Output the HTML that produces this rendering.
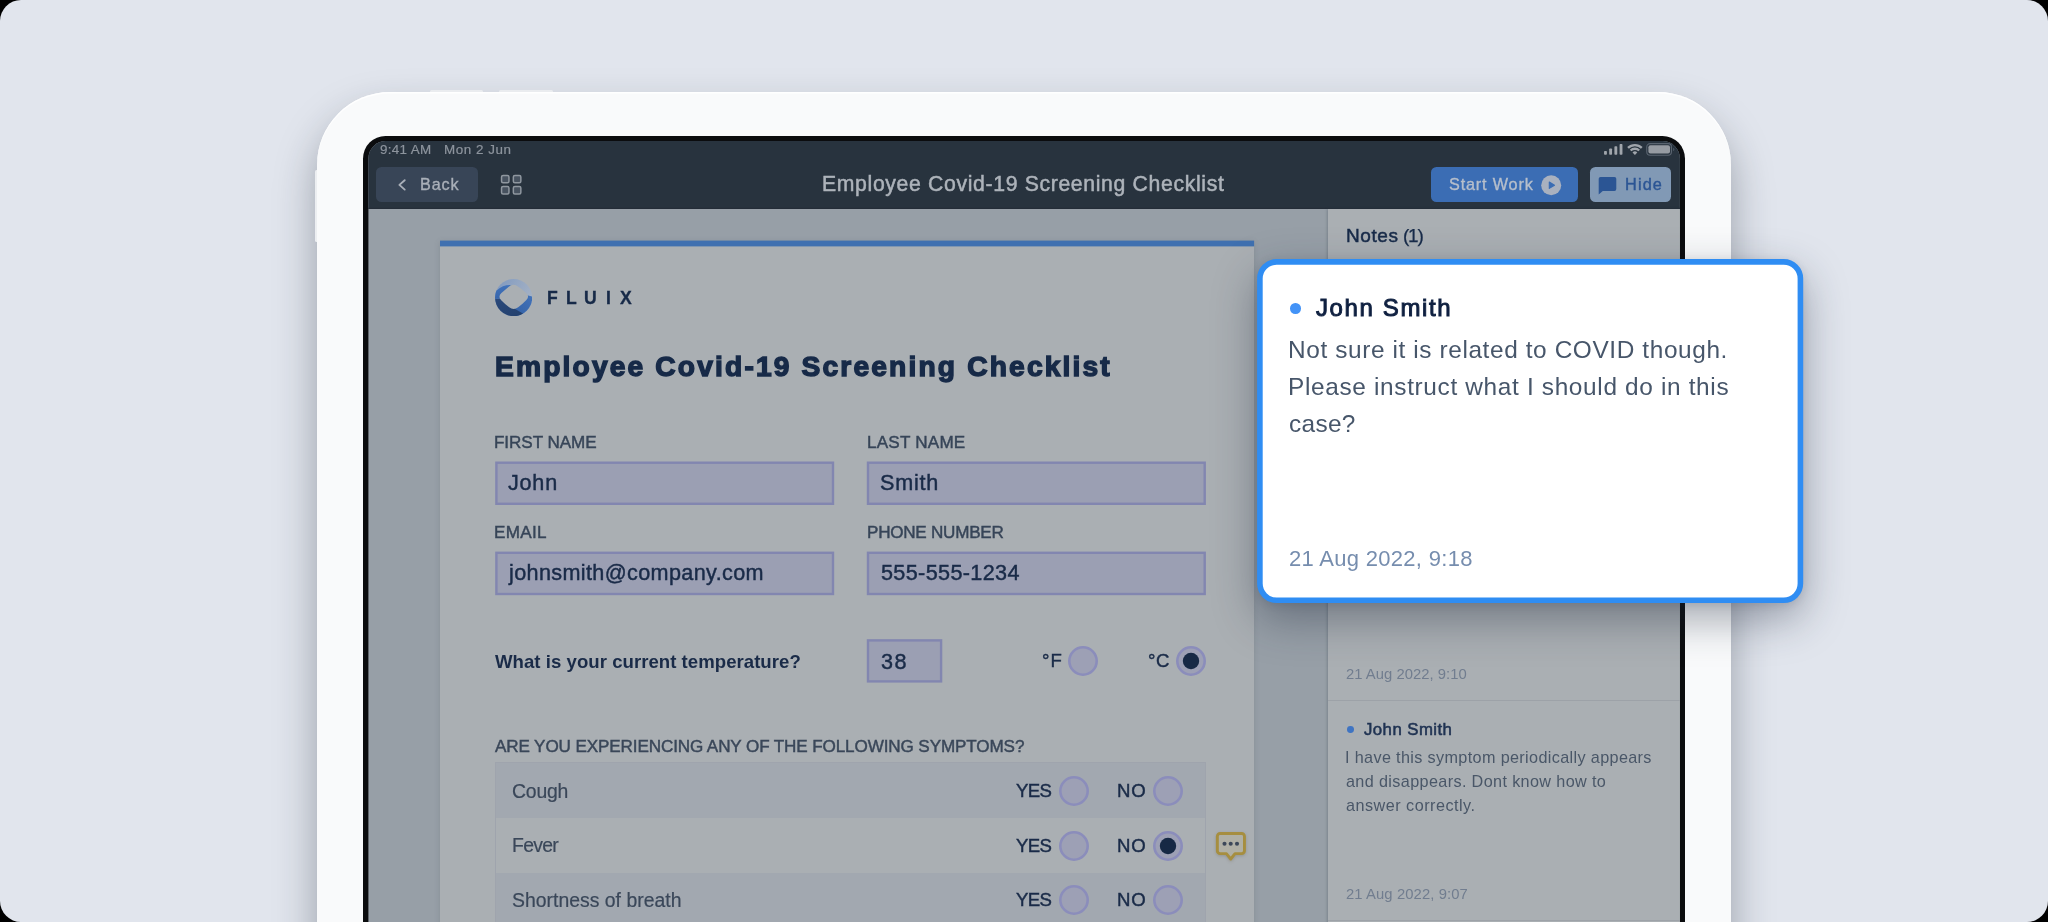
<!DOCTYPE html>
<html><head><meta charset="utf-8"><title>Employee Covid-19 Screening Checklist</title>
<style>
html,body{margin:0;padding:0;background:#000;}
body{width:2048px;height:922px;overflow:hidden;position:relative;font-family:"Liberation Sans",sans-serif;}
#bg{position:absolute;left:0;top:0;width:2048px;height:922px;border-radius:21px;background:#e1e5ed;overflow:hidden;}
.a{position:absolute;display:block;}
.t{will-change:transform;position:absolute;display:block;white-space:nowrap;line-height:1;font-family:"Liberation Sans",sans-serif;}
#tablet{left:317px;top:92px;width:1414px;height:1000px;border-radius:73px;background:#f9fafb;box-shadow:0 22px 42px rgba(28,34,50,.37),inset 0 1.5px 1px #fff;}
#bezel{left:363.1px;top:136px;width:1321.8px;height:1000px;border-radius:22.5px;background:#0b0c0e;}
#screen{left:0;top:0;width:2048px;height:922px;clip-path:inset(141px 368.1px -60px 368.4px round 17.5px);background:#979fa7;}
#nav{left:368px;top:141px;width:1313px;height:67.6px;background:#28333e;box-shadow:inset 0 -1.2px 0 #242d38;}
.btn{border-radius:5.5px;}
#bback{left:376px;top:167.2px;width:102.2px;height:34.8px;background:#384557;}
#bstart{left:1430.7px;top:166.9px;width:147.3px;height:35.2px;background:#3b6db4;}
#bhide{left:1590px;top:166.9px;width:81.2px;height:35.2px;background:#8199b5;}
#doc{left:440px;top:240.6px;width:814px;height:700px;background:#aaafb3;box-shadow:0 1px 6px rgba(60,70,85,.18);}
#notes{left:1328.4px;top:208.6px;width:360px;height:720px;background:#aaafb3;box-shadow:-1px 0 2.5px rgba(50,60,80,.28);}
.sep{left:1328.3px;width:352px;height:1.4px;background:#9da2a8;}
.row{left:496px;width:709.5px;}
#tbl{left:495px;top:762.4px;width:711px;height:170px;box-sizing:border-box;border:1.2px solid #9fa4ad;}
#popup{left:1258px;top:260px;width:544px;height:342px;border-radius:18.5px;background:#fff;box-shadow:0 16px 44px 1px rgba(30,40,60,.40),0 2px 8px 1px rgba(40,50,70,.12);}
.dot{border-radius:50%;}

</style></head>
<body>
<div id="bg">
  <div class="a" id="tablet"></div>
  <div class="a" style="left:430px;top:89.9px;width:53px;height:2.3px;border-radius:1.5px 1.5px 0 0;background:#eaecef"></div>
  <div class="a" style="left:499.3px;top:89.9px;width:53.6px;height:2.3px;border-radius:1.5px 1.5px 0 0;background:#eaecef"></div>
  <div class="a" style="left:314.9px;top:170.2px;width:2.3px;height:71.6px;border-radius:1.5px 0 0 1.5px;background:#eceef1"></div>
  <div class="a" id="bezel"></div>
  <div class="a" id="screen">
    <div class="a" id="nav"></div>
    <div class="a btn" id="bback"></div>
    <div class="a btn" id="bstart"></div>
    <div class="a btn" id="bhide"></div>
    <!-- back chevron -->
    <svg class="a" style="left:390px;top:170px" width="30" height="30" viewBox="390 170 30 30"><path d="M404.7 180.2 L399.4 184.9 L404.7 189.6" fill="none" stroke="#a9afb8" stroke-width="1.9" stroke-linecap="round" stroke-linejoin="round"/></svg>
    <!-- grid icon -->
    <svg class="a" style="left:498px;top:172px" width="26" height="26" viewBox="498 172 26 26"><g fill="#47525f" stroke="#8f979f" stroke-width="1.5"><rect x="501.55" y="175.45" width="7.4" height="7.4" rx="1.5"/><rect x="513.35" y="175.45" width="7.5" height="7.4" rx="1.5"/><rect x="501.55" y="186.6" width="7.4" height="7.4" rx="1.5"/><rect x="513.35" y="186.6" width="7.5" height="7.4" rx="1.5"/></g></svg>
    <!-- status icons -->
    <svg class="a" style="left:1600px;top:141px" width="80" height="18" viewBox="0 0 80 18">
      <g fill="#a0a5ab">
        <rect x="4.05" y="9.9" width="2.85" height="3.9" rx="0.8"/>
        <rect x="9.2" y="7.5" width="2.85" height="6.3" rx="0.8"/>
        <rect x="14.4" y="5.2" width="2.85" height="8.6" rx="0.8"/>
        <rect x="19.6" y="2.9" width="2.85" height="10.9" rx="0.8"/>
      </g>
      <g fill="none" stroke="#a0a5ab" stroke-width="2.3" stroke-linecap="butt">
        <path d="M28.0 6.9 A9.75 9.75 0 0 1 41.8 6.9"/>
        <path d="M30.62 9.52 A6.05 6.05 0 0 1 39.18 9.52"/>
      </g>
      <path d="M34.9 13.9 L32.5 11.5 A3.4 3.4 0 0 1 37.3 11.5 Z" fill="#a0a5ab"/>
      <rect x="46.75" y="2.65" width="24.7" height="11.6" rx="3.4" fill="none" stroke="#5a6470" stroke-width="1.1"/>
      <rect x="48.4" y="4.2" width="21.6" height="8.4" rx="2" fill="#969ba2"/>
      <path d="M73.3 6.7 a2.1 2.1 0 0 1 0 3.5 Z" fill="#5a6470"/>
    </svg>
    <!-- play icon -->
    <svg class="a" style="left:1541px;top:174.8px" width="21" height="21" viewBox="0 0 21 21"><circle cx="10.2" cy="10.2" r="10" fill="#a9b1bf"/><path d="M8.3 7 L13.5 10.2 L8.3 13.4 Z" fill="#3b6db4" stroke="#3b6db4" stroke-width="1.1" stroke-linejoin="round"/></svg>
    <!-- chat icon -->
    <svg class="a" style="left:1598px;top:176px" width="20" height="20" viewBox="0 0 20 20"><path d="M2.6 0.9 H16.4 A1.9 1.9 0 0 1 18.3 2.8 V13.1 A1.9 1.9 0 0 1 16.4 15 H4.8 L0.7 18.6 V2.8 A1.9 1.9 0 0 1 2.6 0.9 Z" fill="#2b5594"/></svg>

    <div class="a" id="doc"></div>
    <svg class="a" style="left:438px;top:238px" width="820" height="12" viewBox="438 238 820 12"><rect x="440" y="240.6" width="814.1" height="5.8" fill="#3f70b0"/></svg>
    <!-- logo -->
    <svg class="a" style="left:494.8px;top:279.2px" width="37.2" height="37.2" viewBox="0 0 37.2 37.2">
      <defs>
        <linearGradient id="lgL" x1="0" y1="0" x2="1" y2="0.6"><stop offset="0" stop-color="#7d97bf"/><stop offset="0.5" stop-color="#93a6c2"/><stop offset="1" stop-color="#a7b3c5"/></linearGradient>
        <linearGradient id="lgM" x1="0" y1="0" x2="0" y2="1"><stop offset="0" stop-color="#4173bb"/><stop offset="1" stop-color="#3765ab"/></linearGradient>
        <linearGradient id="lgN" x1="0" y1="0" x2="1" y2="1"><stop offset="0" stop-color="#2b4a7c"/><stop offset="1" stop-color="#223f6b"/></linearGradient>
        <linearGradient id="lgR" x1="0" y1="1" x2="1" y2="0"><stop offset="0" stop-color="#305ea3"/><stop offset="1" stop-color="#4474ba"/></linearGradient>
        <clipPath id="lc"><circle cx="18.6" cy="18.6" r="18.6"/></clipPath>
      </defs>
      <g clip-path="url(#lc)">
        <rect x="0" y="0" width="37.2" height="37.2" fill="url(#lgL)"/>
        <!-- right-bottom medium blue -->
        <path d="M18.6 18.6 L33.2 16.6 L40 18.2 L40 40 L18 40 Z" fill="url(#lgR)"/>
        <!-- navy bottom-left -->
        <path d="M18.6 18.6 L19.3 29.6 L30.5 36 L30.5 40 L-3 40 L-3 19.8 Z" fill="url(#lgN)"/>
        <!-- left medium blue + overlap wedge -->
        <path d="M18.6 18.6 L-3 20.2 L-3 12.4 L1.9 11.2 Q8.6 5 17.9 6.2 Z" fill="url(#lgM)"/>
      </g>
      <path d="M13.2 8.2 Q17.6 3.9 22.6 7.2 Q27.6 10.4 31 13.8 Q35 17.4 31.4 21 Q27.4 25.2 23.2 28.2 Q18.6 31.6 14.2 28.2 Q9.4 24.6 6.2 21.2 Q2.6 17.6 6.4 14 Z" fill="#aaafb3"/>
    </svg>

    <svg class="a" style="left:490px;top:455px" width="720" height="232" viewBox="490 455 720 232"><g fill="#9b9fb3" stroke="#8286b0" stroke-width="2.4"><rect x="496.4" y="462.7" width="336.6" height="41.1"/><rect x="868.0" y="462.7" width="336.7" height="41.1"/><rect x="496.4" y="552.8" width="336.6" height="41.2"/><rect x="868.0" y="552.8" width="336.7" height="41.2"/><rect x="868.0" y="640.4" width="73.1" height="41.0"/></g></svg>
    <svg class="a" style="left:1067.2px;top:645.2px" width="32" height="32" viewBox="0 0 32 32"><circle cx="16" cy="16" r="13.7" fill="#9da0b5" stroke="#8b8dbb" stroke-width="2.6"/></svg>
    <svg class="a" style="left:1175.2px;top:645.2px" width="32" height="32" viewBox="0 0 32 32"><circle cx="16" cy="16" r="13.7" fill="#9da0b5" stroke="#8b8dbb" stroke-width="2.6"/><circle cx="16" cy="16" r="8.2" fill="#172945"/></svg>

    <div class="a row" style="top:763px;height:55.3px;background:#a2a8b0"></div>
    <div class="a row" style="top:873.1px;height:55px;background:#a2a8b0"></div>
    <div class="a" id="tbl"></div>

    <svg class="a" style="left:1058.2px;top:775.0px" width="32" height="32" viewBox="0 0 32 32"><circle cx="16" cy="16" r="13.7" fill="#9da0b5" stroke="#8b8dbb" stroke-width="2.6"/></svg>
    <svg class="a" style="left:1152.3px;top:775.0px" width="32" height="32" viewBox="0 0 32 32"><circle cx="16" cy="16" r="13.7" fill="#9da0b5" stroke="#8b8dbb" stroke-width="2.6"/></svg>
    <svg class="a" style="left:1058.2px;top:829.6px" width="32" height="32" viewBox="0 0 32 32"><circle cx="16" cy="16" r="13.7" fill="#9da0b5" stroke="#8b8dbb" stroke-width="2.6"/></svg>
    <svg class="a" style="left:1152.3px;top:829.6px" width="32" height="32" viewBox="0 0 32 32"><circle cx="16" cy="16" r="13.7" fill="#9da0b5" stroke="#8b8dbb" stroke-width="2.6"/><circle cx="16" cy="16" r="8.2" fill="#172945"/></svg>
    <svg class="a" style="left:1058.2px;top:884.3px" width="32" height="32" viewBox="0 0 32 32"><circle cx="16" cy="16" r="13.7" fill="#9da0b5" stroke="#8b8dbb" stroke-width="2.6"/></svg>
    <svg class="a" style="left:1152.3px;top:884.3px" width="32" height="32" viewBox="0 0 32 32"><circle cx="16" cy="16" r="13.7" fill="#9da0b5" stroke="#8b8dbb" stroke-width="2.6"/></svg>

    <!-- comment icon -->
    <svg class="a" style="left:1210px;top:826px" width="42" height="40" viewBox="0 0 42 40">
      <path d="M10.2 7.45 H31.6 A2.85 2.85 0 0 1 34.45 10.3 V24.8 A2.85 2.85 0 0 1 31.6 27.65 H25 L20.7 33 L16.4 27.65 H10.2 A2.85 2.85 0 0 1 7.35 24.8 V10.3 A2.85 2.85 0 0 1 10.2 7.45 Z" fill="#b0b0a5" stroke="#a68e3f" stroke-width="2.9" stroke-linejoin="round" style="filter:drop-shadow(0 1px 1.5px rgba(80,70,40,.25))"/>
      <circle cx="14.5" cy="17.7" r="2.05" fill="#3c4859"/><circle cx="20.7" cy="17.7" r="2.05" fill="#3c4859"/><circle cx="27" cy="17.7" r="2.05" fill="#3c4859"/>
    </svg>

    <div class="a" id="notes"></div>
    <div class="a sep" style="top:699.8px"></div>
    <div class="a sep" style="top:919.6px"></div>
    <div class="a dot" style="left:1347px;top:726px;width:6.8px;height:6.8px;background:#3f74c2"></div>
  </div>
  <div class="a" id="popup"></div>
  <svg class="a" style="left:1250px;top:250px" width="560" height="360" viewBox="1250 250 560 360"><rect x="1259.9" y="261.9" width="540.5" height="338.4" rx="16.7" fill="#fff" stroke="#2f8df3" stroke-width="5.6"/></svg>
  <div class="a dot" style="left:1290.4px;top:303px;width:10.6px;height:10.6px;background:#4393f7"></div>
  <span class="t" id="st1" style="left:380px;top:143px;font-size:13.4px;font-weight:400;color:#8d949d;letter-spacing:0.33px;-webkit-text-stroke:0.2px #8d949d;">9:41 AM</span>
<span class="t" id="st2" style="left:444px;top:143px;font-size:13.4px;font-weight:400;color:#8d949d;letter-spacing:0.56px;-webkit-text-stroke:0.2px #8d949d;">Mon 2 Jun</span>
<span class="t" id="back" style="left:420px;top:176px;font-size:16.2px;font-weight:400;color:#aab0b9;letter-spacing:0.84px;-webkit-text-stroke:0.35px #aab0b9;">Back</span>
<span class="t" id="navt" style="left:822px;top:173px;font-size:21.2px;font-weight:400;color:#adb3ba;letter-spacing:0.66px;-webkit-text-stroke:0.5px #adb3ba;">Employee Covid-19 Screening Checklist</span>
<span class="t" id="sw" style="left:1449px;top:176px;font-size:16.2px;font-weight:400;color:#b7bfcb;letter-spacing:0.85px;-webkit-text-stroke:0.35px #b7bfcb;">Start Work</span>
<span class="t" id="hide" style="left:1625px;top:176px;font-size:16.3px;font-weight:400;color:#2b5594;letter-spacing:1.14px;-webkit-text-stroke:0.4px #2b5594;">Hide</span>
<span class="t" id="fl0" style="left:547px;top:290px;font-size:17.6px;font-weight:700;color:#172a48;-webkit-text-stroke:0.3px #172a48;">F</span>
<span class="t" id="fl1" style="left:566px;top:290px;font-size:17.6px;font-weight:700;color:#172a48;-webkit-text-stroke:0.3px #172a48;">L</span>
<span class="t" id="fl2" style="left:584px;top:290px;font-size:17.6px;font-weight:700;color:#172a48;-webkit-text-stroke:0.3px #172a48;">U</span>
<span class="t" id="fl3" style="left:606px;top:290px;font-size:17.6px;font-weight:700;color:#172a48;-webkit-text-stroke:0.3px #172a48;">I</span>
<span class="t" id="fl4" style="left:620px;top:290px;font-size:17.6px;font-weight:700;color:#172a48;-webkit-text-stroke:0.3px #172a48;">X</span>
<span class="t" id="dtitle" style="left:495px;top:352px;font-size:28.2px;font-weight:700;color:#172a48;letter-spacing:2.15px;-webkit-text-stroke:1.4px #172a48;">Employee Covid-19 Screening Checklist</span>
<span class="t" id="l1" style="left:494px;top:434px;font-size:17.1px;font-weight:400;color:#374558;letter-spacing:-0.07px;-webkit-text-stroke:0.45px #374558;">FIRST NAME</span>
<span class="t" id="l2" style="left:867px;top:434px;font-size:17.1px;font-weight:400;color:#374558;letter-spacing:0.21px;-webkit-text-stroke:0.45px #374558;">LAST NAME</span>
<span class="t" id="v1" style="left:508px;top:472px;font-size:21.6px;font-weight:400;color:#1a2b48;letter-spacing:0.78px;-webkit-text-stroke:0.45px #1a2b48;">John</span>
<span class="t" id="v2" style="left:880px;top:472px;font-size:21.6px;font-weight:400;color:#1a2b48;letter-spacing:0.79px;-webkit-text-stroke:0.45px #1a2b48;">Smith</span>
<span class="t" id="l3" style="left:494px;top:524px;font-size:17.1px;font-weight:400;color:#374558;letter-spacing:0.28px;-webkit-text-stroke:0.45px #374558;">EMAIL</span>
<span class="t" id="l4" style="left:867px;top:524px;font-size:17.1px;font-weight:400;color:#374558;letter-spacing:-0.26px;-webkit-text-stroke:0.45px #374558;">PHONE NUMBER</span>
<span class="t" id="v3" style="left:509px;top:562px;font-size:21.6px;font-weight:400;color:#1a2b48;letter-spacing:0.37px;-webkit-text-stroke:0.45px #1a2b48;">johnsmith@company.com</span>
<span class="t" id="v4" style="left:881px;top:562px;font-size:21.6px;font-weight:400;color:#1a2b48;letter-spacing:0.36px;-webkit-text-stroke:0.45px #1a2b48;">555-555-1234</span>
<span class="t" id="q1" style="left:495px;top:653px;font-size:18.6px;font-weight:700;color:#1a2b48;letter-spacing:0.03px;">What is your current temperature?</span>
<span class="t" id="v5" style="left:881px;top:651px;font-size:21.6px;font-weight:400;color:#1a2b48;letter-spacing:1.39px;-webkit-text-stroke:0.45px #1a2b48;">38</span>
<span class="t" id="df" style="left:1042px;top:652px;font-size:18.6px;font-weight:400;color:#1a2b48;letter-spacing:0.97px;-webkit-text-stroke:0.4px #1a2b48;">°F</span>
<span class="t" id="dc" style="left:1148px;top:652px;font-size:18.6px;font-weight:400;color:#1a2b48;letter-spacing:0.64px;-webkit-text-stroke:0.4px #1a2b48;">°C</span>
<span class="t" id="q2" style="left:495px;top:738px;font-size:17.1px;font-weight:400;color:#3a4759;letter-spacing:-0.12px;-webkit-text-stroke:0.45px #3a4759;">ARE YOU EXPERIENCING ANY OF THE FOLLOWING SYMPTOMS?</span>
<span class="t" id="r1" style="left:512px;top:782px;font-size:19.4px;font-weight:400;color:#3a4759;letter-spacing:-0.19px;-webkit-text-stroke:0.2px #3a4759;">Cough</span>
<span class="t" id="r2" style="left:512px;top:836px;font-size:19.4px;font-weight:400;color:#3a4759;letter-spacing:-0.69px;-webkit-text-stroke:0.2px #3a4759;">Fever</span>
<span class="t" id="r3" style="left:512px;top:891px;font-size:19.4px;font-weight:400;color:#3a4759;letter-spacing:0.01px;-webkit-text-stroke:0.2px #3a4759;">Shortness of breath</span>
<span class="t" id="y1" style="left:1016px;top:782px;font-size:18.6px;font-weight:400;color:#1a2b48;letter-spacing:-0.59px;-webkit-text-stroke:0.45px #1a2b48;">YES</span>
<span class="t" id="n1" style="left:1117px;top:782px;font-size:18.6px;font-weight:400;color:#1a2b48;letter-spacing:0.75px;-webkit-text-stroke:0.45px #1a2b48;">NO</span>
<span class="t" id="y2" style="left:1016px;top:837px;font-size:18.6px;font-weight:400;color:#1a2b48;letter-spacing:-0.59px;-webkit-text-stroke:0.45px #1a2b48;">YES</span>
<span class="t" id="n2" style="left:1117px;top:837px;font-size:18.6px;font-weight:400;color:#1a2b48;letter-spacing:0.75px;-webkit-text-stroke:0.45px #1a2b48;">NO</span>
<span class="t" id="y3" style="left:1016px;top:891px;font-size:18.6px;font-weight:400;color:#1a2b48;letter-spacing:-0.59px;-webkit-text-stroke:0.45px #1a2b48;">YES</span>
<span class="t" id="n3" style="left:1117px;top:891px;font-size:18.6px;font-weight:400;color:#1a2b48;letter-spacing:0.75px;-webkit-text-stroke:0.45px #1a2b48;">NO</span>
<span class="t" id="nh1" style="left:1346px;top:226px;font-size:19px;font-weight:400;color:#172a48;letter-spacing:0.60px;-webkit-text-stroke:0.5px #172a48;">Notes</span>
<span class="t" id="nh2" style="left:1403px;top:226px;font-size:19px;font-weight:400;color:#172a48;letter-spacing:-1.23px;-webkit-text-stroke:0.25px #172a48;">(1)</span>
<span class="t" id="nd1" style="left:1346px;top:667px;font-size:14.8px;font-weight:400;color:#717d8f;letter-spacing:0.04px;">21 Aug 2022, 9:10</span>
<span class="t" id="nn" style="left:1364px;top:722px;font-size:16.8px;font-weight:400;color:#1f3252;letter-spacing:0.44px;-webkit-text-stroke:0.55px #1f3252;">John Smith</span>
<span class="t" id="nb1" style="left:1345px;top:749px;font-size:16.2px;font-weight:400;color:#4a5768;letter-spacing:0.36px;">I have this symptom periodically appears</span>
<span class="t" id="nb2" style="left:1346px;top:773px;font-size:16.2px;font-weight:400;color:#4a5768;letter-spacing:0.37px;">and disappears. Dont know how to</span>
<span class="t" id="nb3" style="left:1346px;top:797px;font-size:16.2px;font-weight:400;color:#4a5768;letter-spacing:0.49px;">answer correctly.</span>
<span class="t" id="nd2" style="left:1346px;top:887px;font-size:14.8px;font-weight:400;color:#717d8f;letter-spacing:0.10px;">21 Aug 2022, 9:07</span>
<span class="t" id="pn" style="left:1316px;top:296px;font-size:24px;font-weight:400;color:#0f2040;letter-spacing:1.62px;-webkit-text-stroke:0.95px #0f2040;">John Smith</span>
<span class="t" id="pb1" style="left:1288px;top:338px;font-size:24.4px;font-weight:400;color:#47566a;letter-spacing:0.61px;">Not sure it is related to COVID though.</span>
<span class="t" id="pb2" style="left:1288px;top:375px;font-size:24.4px;font-weight:400;color:#47566a;letter-spacing:0.66px;">Please instruct what I should do in this</span>
<span class="t" id="pb3" style="left:1289px;top:412px;font-size:24.4px;font-weight:400;color:#47566a;letter-spacing:0.33px;">case?</span>
<span class="t" id="pd" style="left:1289px;top:548px;font-size:22px;font-weight:400;color:#768dae;letter-spacing:0.30px;">21 Aug 2022, 9:18</span>
</div>

</body></html>
